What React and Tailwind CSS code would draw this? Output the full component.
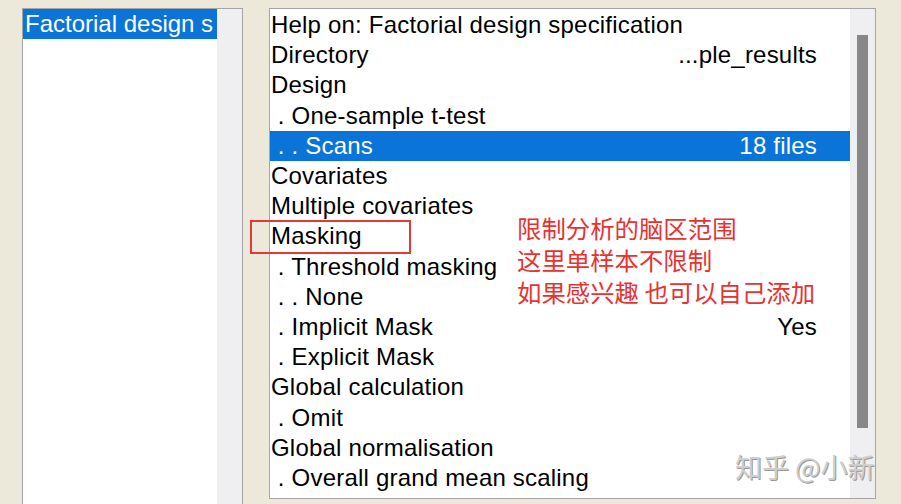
import React from 'react'

const rows = [
  { label: 'Help on: Factorial design specification' },
  { label: 'Directory', value: '...ple_results' },
  { label: 'Design' },
  { label: ' . One-sample t-test' },
  { label: ' . . Scans', value: '18 files', selected: true },
  { label: 'Covariates' },
  { label: 'Multiple covariates' },
  { label: 'Masking' },
  { label: ' . Threshold masking' },
  { label: ' . . None' },
  { label: ' . Implicit Mask', value: 'Yes' },
  { label: ' . Explicit Mask' },
  { label: 'Global calculation' },
  { label: ' . Omit' },
  { label: 'Global normalisation' },
  { label: ' . Overall grand mean scaling' },
]

const Row = ({ label, value, selected }) => (
  <div
    className={`h-[30.2px] flex items-center justify-between pl-[1px] pr-[33px] whitespace-pre ${
      selected ? 'bg-[#0b74d8] text-white' : 'text-black'
    }`}
  >
    <span>{label}</span>
    {value && <span>{value}</span>}
  </div>
)

export default function App() {
  return (
    <div
      className="relative w-[901px] h-[504px] overflow-hidden bg-[#ece9da] pt-[8px] flex"
      style={{ fontFamily: '"Liberation Sans", Arial, sans-serif' }}
    >
      {/* left module list */}
      <div className="ml-[22px] w-[221px] h-[510px] border border-[#a5a5a5] bg-white flex">
        <div className="w-[194px] text-[24px] leading-[30px] overflow-hidden">
          <div className="bg-[#0b74d8] text-white pl-[2px] whitespace-nowrap overflow-hidden">
            Factorial design s
          </div>
        </div>
        <div className="flex-1 bg-[#efeff2]" />
      </div>

      {/* right tree */}
      <div className="ml-[26px] w-[607px] h-[491px] border border-[#a5a5a5] bg-white flex">
        <div className="flex-1 text-[24px] leading-[30px] tracking-[0.2px] pt-[1px]">
          {rows.map((r, i) => (
            <Row key={i} {...r} />
          ))}
        </div>
        <div className="w-[25px] bg-[#efeff2] pt-[26px] pl-[7px]">
          <div className="w-[11px] h-[393px] bg-[#878787]" />
        </div>
      </div>

      {/* annotation box */}
      <div className="absolute left-[250px] top-[220px] w-[161px] h-[34px] border-2 border-[#e53935]" />

      {/* annotation text */}
      <div
        className="absolute left-[517px] top-[212px] text-[#e8322f] text-[24.4px] leading-[32px] whitespace-nowrap"
        style={{ fontFamily: '"Noto Sans CJK SC", sans-serif' }}
      >
        <div>限制分析的脑区范围</div>
        <div>这里单样本不限制</div>
        <div>如果感兴趣 也可以自己添加</div>
      </div>

      {/* watermark */}
      <div
        className="absolute left-[735px] top-[449px] text-[27px] leading-[36px] text-[#cfcfcf] whitespace-nowrap"
        style={{
          fontFamily: '"Noto Sans CJK SC", sans-serif',
          textShadow: '1px 1px 0 #9a9a9a',
        }}
      >
        知乎 @小新
      </div>
    </div>
  )
}
